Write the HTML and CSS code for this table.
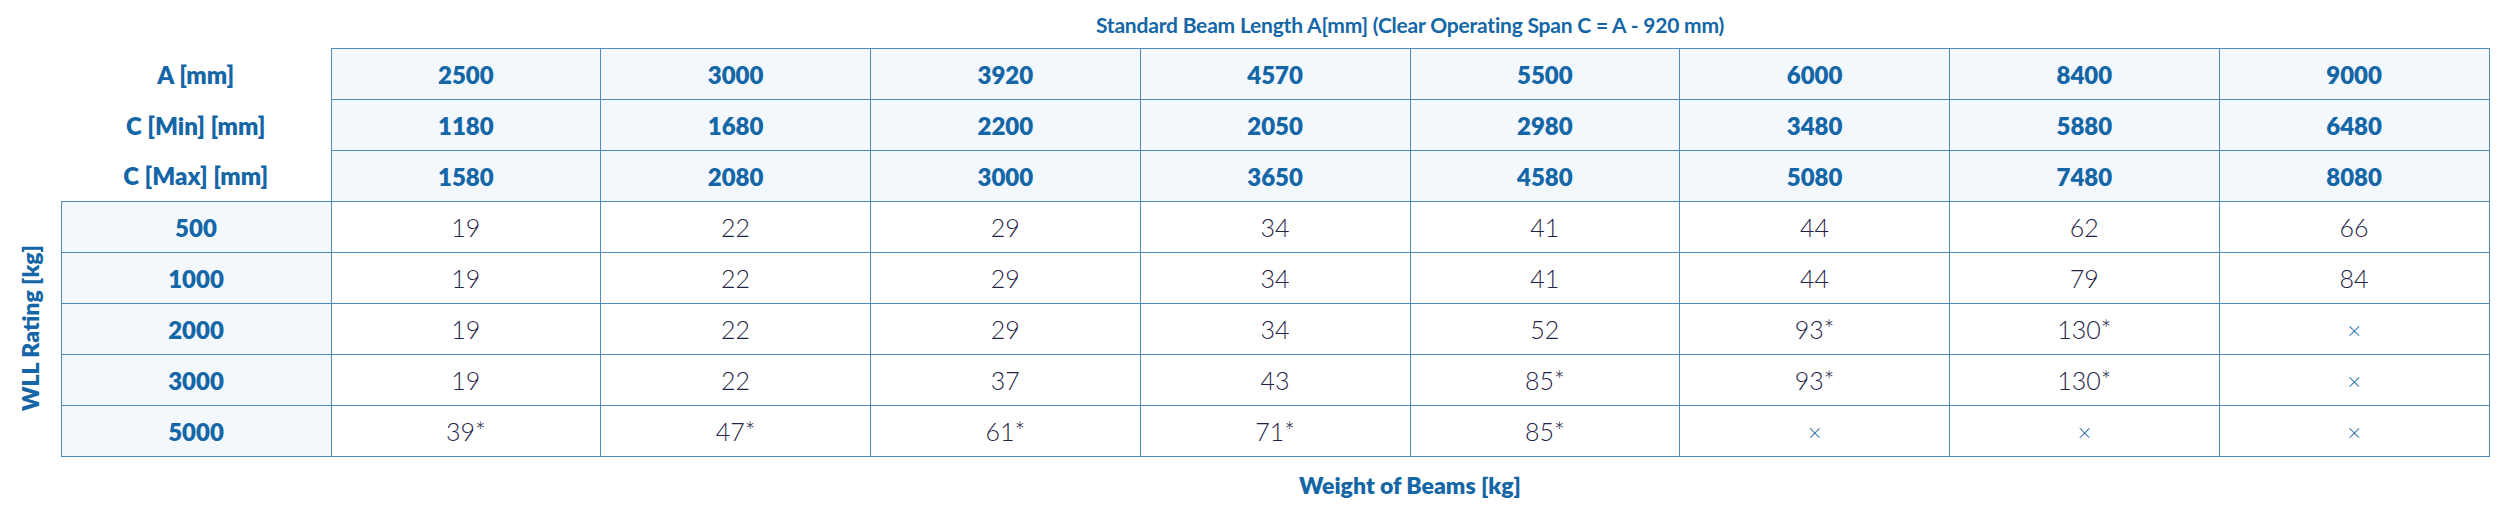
FILE: index.html
```html
<!DOCTYPE html>
<html lang="en">
<head>
<meta charset="utf-8">
<title>Standard Beam Length – Weight of Beams</title>
<link rel="stylesheet" href="styles.css">
</head>
<body>
<div class="chart">
  <div class="title-row">
    <div class="title">Standard Beam Length A[mm] (Clear Operating Span C = A - 920 mm)</div>
  </div>
  <table class="grid">
    <colgroup>
      <col class="c-v">
      <col class="c-l">
      <col class="c-d"><col class="c-d"><col class="c-d"><col class="c-d">
      <col class="c-d"><col class="c-d"><col class="c-d"><col class="c-d">
    </colgroup>
    <tbody>
      <tr class="hrow">
        <td class="blank"></td>
        <th class="rlabel">A [mm]</th>
        <td class="hcell">2500</td><td class="hcell">3000</td><td class="hcell">3920</td><td class="hcell">4570</td>
        <td class="hcell">5500</td><td class="hcell">6000</td><td class="hcell">8400</td><td class="hcell">9000</td>
      </tr>
      <tr class="hrow">
        <td class="blank"></td>
        <th class="rlabel">C [Min] [mm]</th>
        <td class="hcell">1180</td><td class="hcell">1680</td><td class="hcell">2200</td><td class="hcell">2050</td>
        <td class="hcell">2980</td><td class="hcell">3480</td><td class="hcell">5880</td><td class="hcell">6480</td>
      </tr>
      <tr class="hrow">
        <td class="blank"></td>
        <th class="rlabel">C [Max] [mm]</th>
        <td class="hcell">1580</td><td class="hcell">2080</td><td class="hcell">3000</td><td class="hcell">3650</td>
        <td class="hcell">4580</td><td class="hcell">5080</td><td class="hcell">7480</td><td class="hcell">8080</td>
      </tr>
      <tr class="drow">
        <th class="vlabel" rowspan="5"><span class="vtext">WLL Rating [kg]</span></th>
        <th class="wll">500</th>
        <td>19</td><td>22</td><td>29</td><td>34</td><td>41</td><td>44</td><td>62</td><td>66</td>
      </tr>
      <tr class="drow">
        <th class="wll">1000</th>
        <td>19</td><td>22</td><td>29</td><td>34</td><td>41</td><td>44</td><td>79</td><td>84</td>
      </tr>
      <tr class="drow">
        <th class="wll">2000</th>
        <td>19</td><td>22</td><td>29</td><td>34</td><td>52</td><td>93*</td><td>130*</td><td class="na">×</td>
      </tr>
      <tr class="drow">
        <th class="wll">3000</th>
        <td>19</td><td>22</td><td>37</td><td>43</td><td>85*</td><td>93*</td><td>130*</td><td class="na">×</td>
      </tr>
      <tr class="drow">
        <th class="wll">5000</th>
        <td>39*</td><td>47*</td><td>61*</td><td>71*</td><td>85*</td><td class="na">×</td><td class="na">×</td><td class="na">×</td>
      </tr>
    </tbody>
  </table>
  <div class="foot-row">
    <div class="foot">Weight of Beams [kg]</div>
  </div>
</div>
</body>
</html>
```
FILE: styles.css
```css
html, body {
  margin: 0;
  padding: 0;
  background: #ffffff;
}

body {
  font-family: Lato, "Open Sans", "DejaVu Sans", sans-serif;
  color: #1466a6;
}

.chart {
  width: 2489px;
}

.title-row {
  height: 48px;
  padding-left: 331px;
  box-sizing: border-box;
}

.title {
  padding-top: 12px;
  text-align: center;
  font-weight: 700;
  font-size: 21px;
  line-height: 25px;
  letter-spacing: -0.2px;
  color: #1466a6;
}

.grid {
  border-collapse: collapse;
  table-layout: fixed;
  width: 2489px;
}

.c-v { width: 61px; }
.c-l { width: 270px; }
.c-d { width: 269.75px; }

.grid tr {
  height: 51px;
}

.grid td,
.grid th {
  padding: 0;
  text-align: center;
  vertical-align: middle;
}

.blank {
  border: none;
}

.rlabel {
  border: none;
  font-weight: 800;
  font-size: 24px;
  color: #1466a6;
}

.hcell {
  border: 1px solid #4f8abb;
  background: #f3f8fd;
  font-weight: 800;
  font-size: 24px;
  color: #1466a6;
}

.wll {
  border: 1px solid #4f8abb;
  background: #f3f8fd;
  font-weight: 800;
  font-size: 24px;
  color: #1466a6;
}

.drow td {
  border: 1px solid #4f8abb;
  background: #ffffff;
  font-weight: 300;
  font-size: 25px;
  color: #1f2446;
}

.drow td.na {
  color: #1f6aa6;
  font-size: 24px;
}

.vlabel {
  border: none;
  padding-top: 40px;
}

.vtext {
  display: inline-block;
  writing-mode: vertical-rl;
  transform: rotate(180deg);
  font-weight: 800;
  font-size: 23px;
  line-height: 25px;
  color: #1466a6;
  white-space: nowrap;
}

.foot-row {
  padding-left: 331px;
  padding-top: 14px;
  box-sizing: border-box;
}

.foot {
  text-align: center;
  font-weight: 800;
  font-size: 23px;
  line-height: 28px;
  color: #1466a6;
}
```
